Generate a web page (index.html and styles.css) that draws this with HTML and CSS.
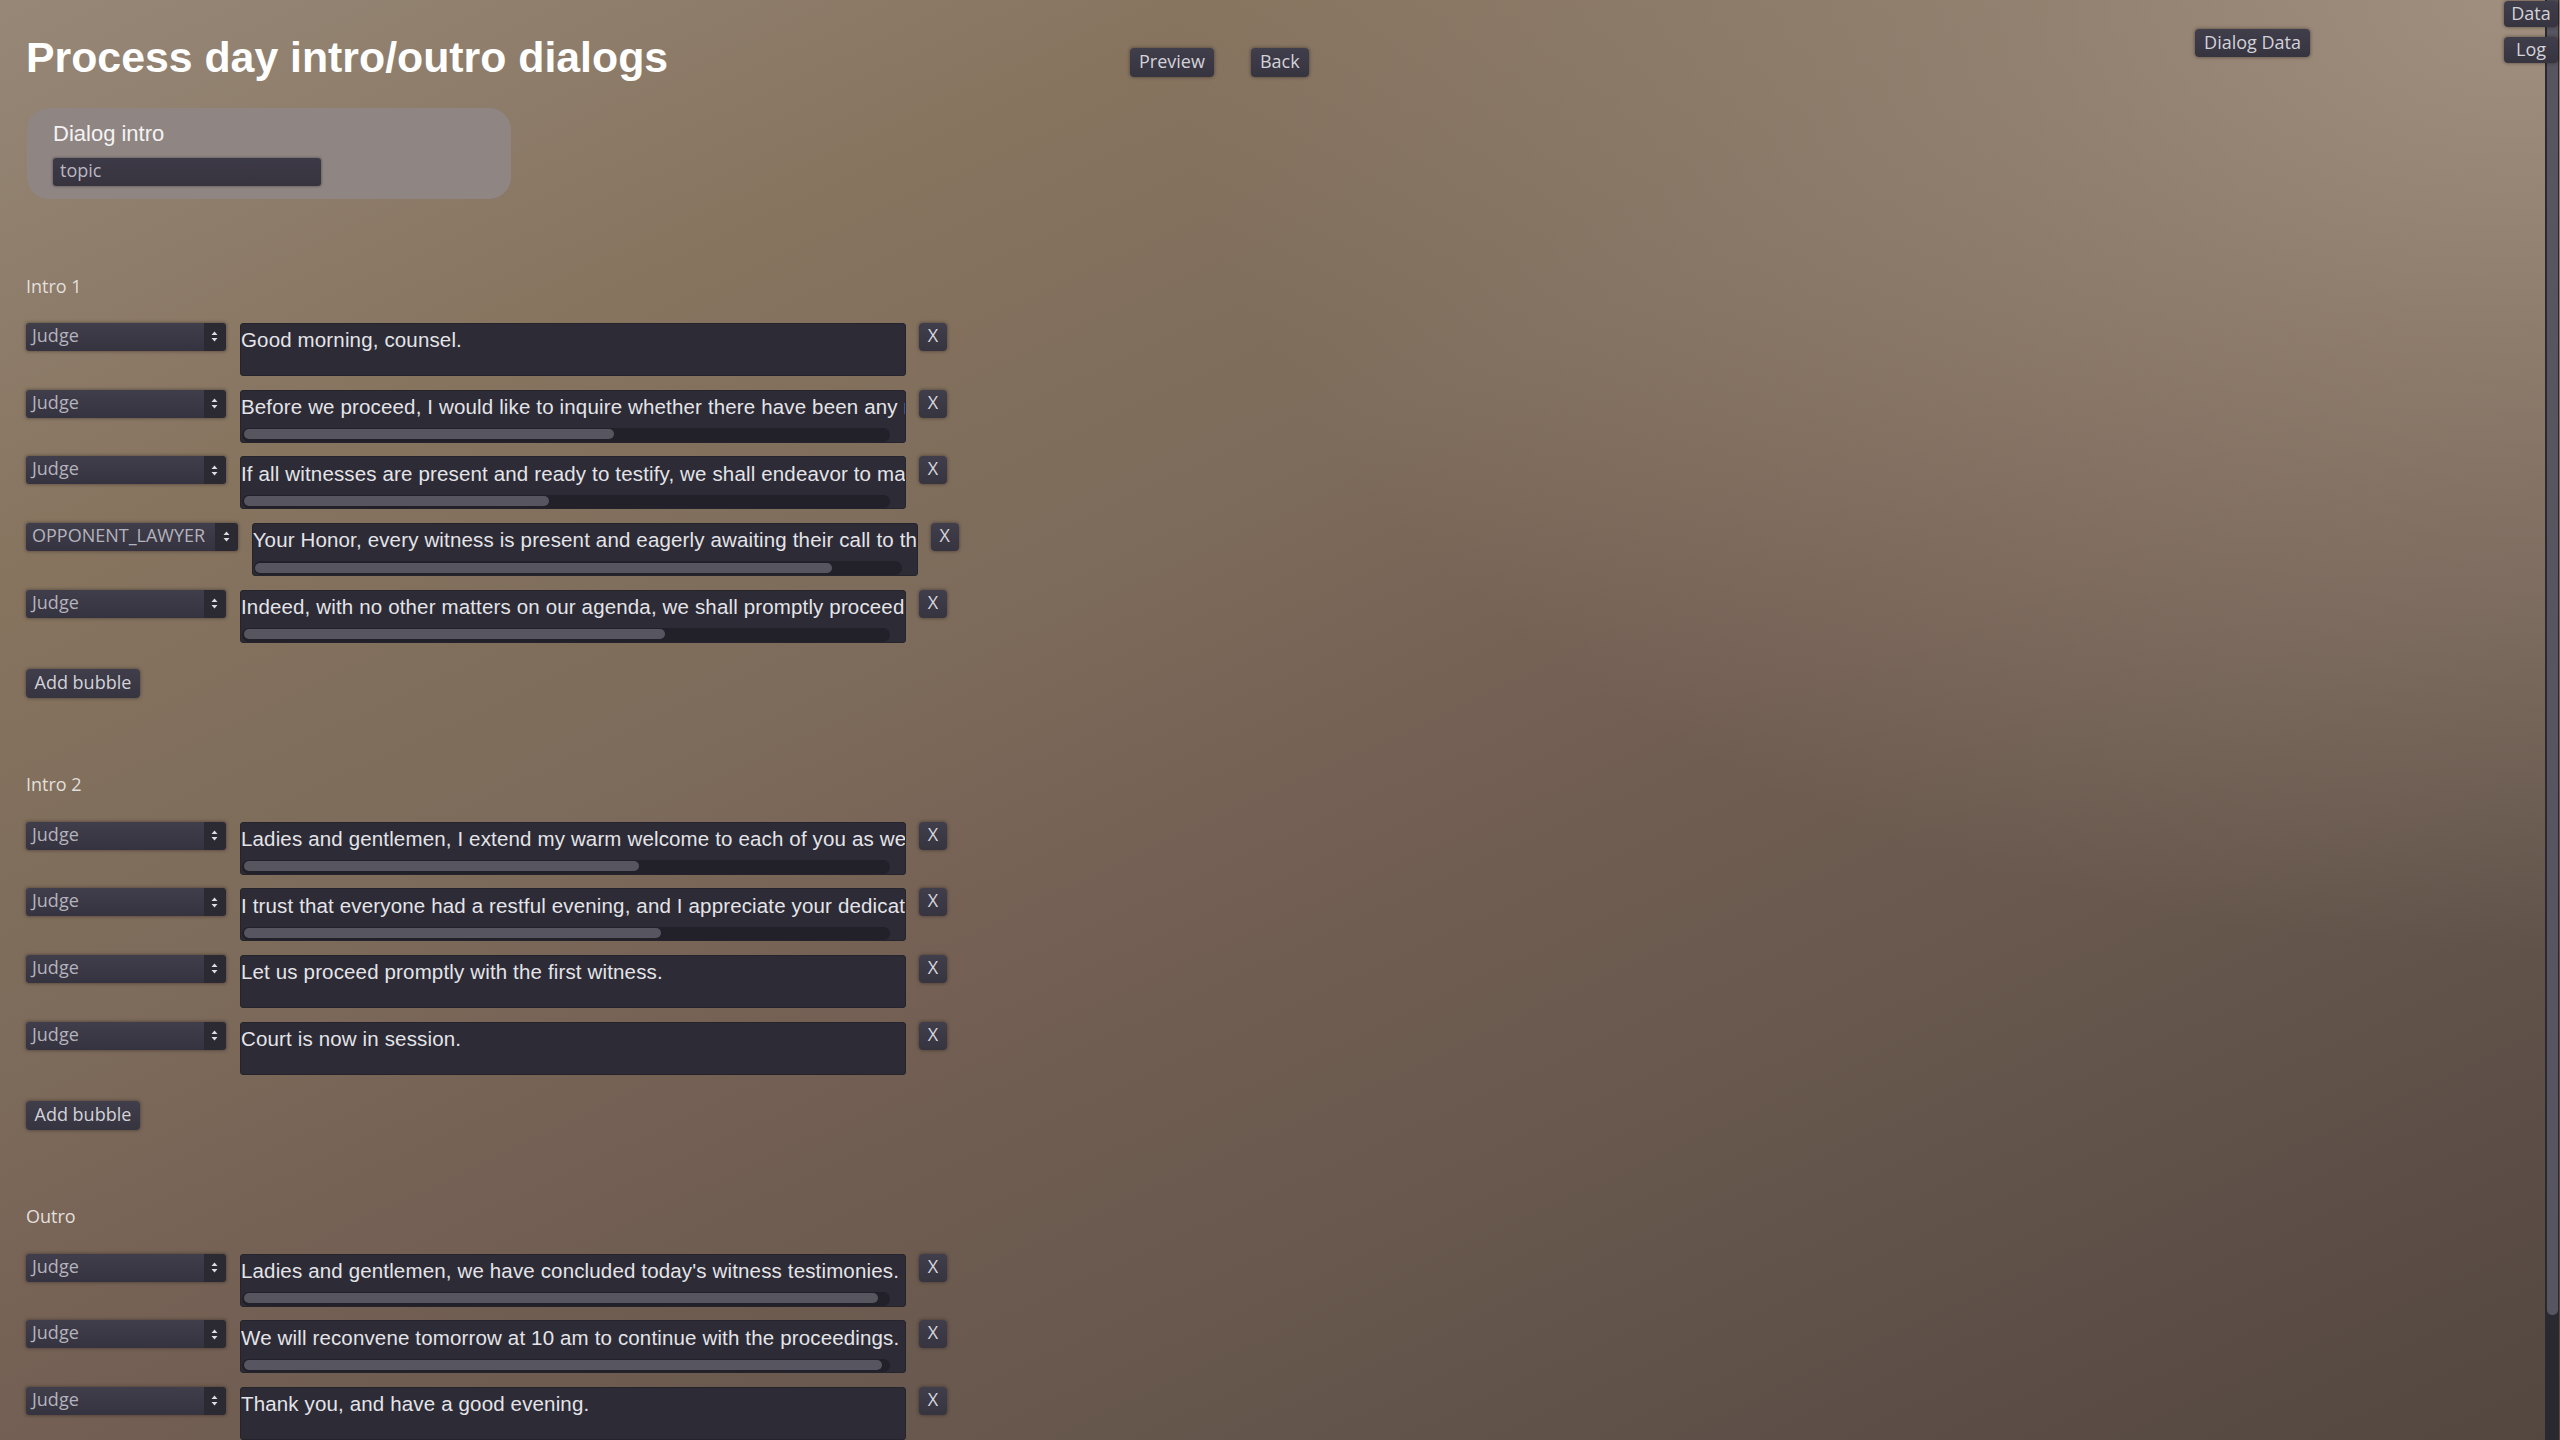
FILE: index.html
```html
<!DOCTYPE html>
<html lang="en">
<head>
<meta charset="utf-8">
<title>Process day intro/outro dialogs</title>
<link rel="stylesheet" href="styles.css">
</head>
<body>
<div class="page">
  <header class="header">
    <h1 class="title">Process day intro/outro dialogs</h1>
    <nav class="nav">
      <button class="btn">Preview</button>
      <button class="btn">Back</button>
    </nav>
    <button class="btn dialog-data">Dialog Data</button>
  </header>

  <section class="intro-panel">
    <div class="panel-label">Dialog intro</div>
    <div class="topic-input">topic</div>
  </section>

  <section class="group">
    <div class="group-label">Intro 1</div>
    <div class="bubbles">
      <div class="bubble">
        <div class="select"><span class="select-value">Judge</span><span class="select-arrow"><svg width="7" height="11" viewBox="0 0 7 11"><path d="M3.5 0.5 L6.5 4 L0.5 4 Z M0.5 7 L6.5 7 L3.5 10.5 Z"/></svg></span></div>
        <div class="textbox"><div class="textbox-text">Good morning, counsel.</div></div>
        <button class="btn btn-x">X</button>
      </div>
      <div class="bubble">
        <div class="select"><span class="select-value">Judge</span><span class="select-arrow"><svg width="7" height="11" viewBox="0 0 7 11"><path d="M3.5 0.5 L6.5 4 L0.5 4 Z M0.5 7 L6.5 7 L3.5 10.5 Z"/></svg></span></div>
        <div class="textbox"><div class="textbox-text">Before we proceed, I would like to inquire whether there have been any new developments since our last session.</div><div class="hscroll"><div class="hgrab" style="width:370px"></div></div></div>
        <button class="btn btn-x">X</button>
      </div>
      <div class="bubble">
        <div class="select"><span class="select-value">Judge</span><span class="select-arrow"><svg width="7" height="11" viewBox="0 0 7 11"><path d="M3.5 0.5 L6.5 4 L0.5 4 Z M0.5 7 L6.5 7 L3.5 10.5 Z"/></svg></span></div>
        <div class="textbox"><div class="textbox-text">If all witnesses are present and ready to testify, we shall endeavor to make swift progress today.</div><div class="hscroll"><div class="hgrab" style="width:305px"></div></div></div>
        <button class="btn btn-x">X</button>
      </div>
      <div class="bubble">
        <div class="select"><span class="select-value">OPPONENT_LAWYER</span><span class="select-arrow"><svg width="7" height="11" viewBox="0 0 7 11"><path d="M3.5 0.5 L6.5 4 L0.5 4 Z M0.5 7 L6.5 7 L3.5 10.5 Z"/></svg></span></div>
        <div class="textbox"><div class="textbox-text">Your Honor, every witness is present and eagerly awaiting their call to the stand.</div><div class="hscroll"><div class="hgrab" style="width:577px"></div></div></div>
        <button class="btn btn-x">X</button>
      </div>
      <div class="bubble">
        <div class="select"><span class="select-value">Judge</span><span class="select-arrow"><svg width="7" height="11" viewBox="0 0 7 11"><path d="M3.5 0.5 L6.5 4 L0.5 4 Z M0.5 7 L6.5 7 L3.5 10.5 Z"/></svg></span></div>
        <div class="textbox"><div class="textbox-text">Indeed, with no other matters on our agenda, we shall promptly proceed with today's hearing.</div><div class="hscroll"><div class="hgrab" style="width:421px"></div></div></div>
        <button class="btn btn-x">X</button>
      </div>
    </div>
    <button class="btn add">Add bubble</button>
  </section>

  <section class="group">
    <div class="group-label">Intro 2</div>
    <div class="bubbles">
      <div class="bubble">
        <div class="select"><span class="select-value">Judge</span><span class="select-arrow"><svg width="7" height="11" viewBox="0 0 7 11"><path d="M3.5 0.5 L6.5 4 L0.5 4 Z M0.5 7 L6.5 7 L3.5 10.5 Z"/></svg></span></div>
        <div class="textbox"><div class="textbox-text">Ladies and gentlemen, I extend my warm welcome to each of you as we gather here today.</div><div class="hscroll"><div class="hgrab" style="width:395px"></div></div></div>
        <button class="btn btn-x">X</button>
      </div>
      <div class="bubble">
        <div class="select"><span class="select-value">Judge</span><span class="select-arrow"><svg width="7" height="11" viewBox="0 0 7 11"><path d="M3.5 0.5 L6.5 4 L0.5 4 Z M0.5 7 L6.5 7 L3.5 10.5 Z"/></svg></span></div>
        <div class="textbox"><div class="textbox-text">I trust that everyone had a restful evening, and I appreciate your dedication to this case.</div><div class="hscroll"><div class="hgrab" style="width:417px"></div></div></div>
        <button class="btn btn-x">X</button>
      </div>
      <div class="bubble">
        <div class="select"><span class="select-value">Judge</span><span class="select-arrow"><svg width="7" height="11" viewBox="0 0 7 11"><path d="M3.5 0.5 L6.5 4 L0.5 4 Z M0.5 7 L6.5 7 L3.5 10.5 Z"/></svg></span></div>
        <div class="textbox"><div class="textbox-text">Let us proceed promptly with the first witness.</div></div>
        <button class="btn btn-x">X</button>
      </div>
      <div class="bubble">
        <div class="select"><span class="select-value">Judge</span><span class="select-arrow"><svg width="7" height="11" viewBox="0 0 7 11"><path d="M3.5 0.5 L6.5 4 L0.5 4 Z M0.5 7 L6.5 7 L3.5 10.5 Z"/></svg></span></div>
        <div class="textbox"><div class="textbox-text">Court is now in session.</div></div>
        <button class="btn btn-x">X</button>
      </div>
    </div>
    <button class="btn add">Add bubble</button>
  </section>

  <section class="group">
    <div class="group-label">Outro</div>
    <div class="bubbles">
      <div class="bubble">
        <div class="select"><span class="select-value">Judge</span><span class="select-arrow"><svg width="7" height="11" viewBox="0 0 7 11"><path d="M3.5 0.5 L6.5 4 L0.5 4 Z M0.5 7 L6.5 7 L3.5 10.5 Z"/></svg></span></div>
        <div class="textbox"><div class="textbox-text">Ladies and gentlemen, we have concluded today's witness testimonies.</div><div class="hscroll"><div class="hgrab" style="width:634px"></div></div></div>
        <button class="btn btn-x">X</button>
      </div>
      <div class="bubble">
        <div class="select"><span class="select-value">Judge</span><span class="select-arrow"><svg width="7" height="11" viewBox="0 0 7 11"><path d="M3.5 0.5 L6.5 4 L0.5 4 Z M0.5 7 L6.5 7 L3.5 10.5 Z"/></svg></span></div>
        <div class="textbox"><div class="textbox-text">We will reconvene tomorrow at 10 am to continue with the proceedings.</div><div class="hscroll"><div class="hgrab" style="width:638px"></div></div></div>
        <button class="btn btn-x">X</button>
      </div>
      <div class="bubble">
        <div class="select"><span class="select-value">Judge</span><span class="select-arrow"><svg width="7" height="11" viewBox="0 0 7 11"><path d="M3.5 0.5 L6.5 4 L0.5 4 Z M0.5 7 L6.5 7 L3.5 10.5 Z"/></svg></span></div>
        <div class="textbox"><div class="textbox-text">Thank you, and have a good evening.</div></div>
        <button class="btn btn-x">X</button>
      </div>
    </div>
    <button class="btn add">Add bubble</button>
  </section>

  <div class="vscroll"><div class="vgrab"></div></div>
  <div class="side-buttons">
    <button class="btn side">Data</button>
    <button class="btn side">Log</button>
  </div>
</div>
</body>
</html>
```

FILE: styles.css
```css
html, body {
  margin: 0;
  padding: 0;
  height: 1440px;
  overflow: hidden;
}

body {
  font-family: "Open Sans", "Noto Sans", sans-serif;
  background: #7a6858;
}

.page {
  position: relative;
  width: 2560px;
  height: 1440px;
  box-sizing: border-box;
  padding-left: 26px;
  overflow: hidden;
  background:
    radial-gradient(ellipse 1350px 950px at 2520px 0px, rgba(160, 143, 126, 1) 0%, rgba(160, 143, 126, 0.6) 35%, rgba(160, 143, 126, 0) 100%),
    linear-gradient(155deg, #978777 0%, #86745f 22%, #7d6b5b 40%, #735f53 55%, #65564c 75%, #574a43 94%, #54473f 100%);
}

/* header */
.header {
  display: flex;
  align-items: flex-start;
  padding-right: 250px;
}

.title {
  flex: 0 0 1104px;
  margin: 32px 0 0 0;
  font: bold 42.8px/50px "Liberation Sans", Arial, sans-serif;
  color: #ffffff;
}

.nav {
  display: flex;
  gap: 37px;
  margin-top: 48px;
}

.btn {
  display: block;
  height: 29px;
  box-sizing: border-box;
  padding: 0 9px 3px;
  margin: 0;
  border: none;
  border-radius: 4px;
  background: linear-gradient(#403e4b, #36343f);
  color: #d3d2d9;
  font: 18px/26px "Open Sans", "Noto Sans", sans-serif;
  white-space: nowrap;
  box-shadow: 0 0 3px 1px rgba(35, 26, 22, 0.35);
}

.dialog-data {
  margin-left: auto;
  margin-top: 29px;
  height: 28px;
  padding-bottom: 2px;
}

/* intro panel */
.intro-panel {
  margin: 26px 0 0 1px;
  width: 484px;
  height: 91px;
  box-sizing: border-box;
  padding: 13px 26px 0;
  background: #8f8684;
  border-radius: 22px;
}

.panel-label {
  font: 22px/25px "Liberation Sans", Arial, sans-serif;
  color: #f4f2f2;
  margin-bottom: 12px;
}

.topic-input {
  width: 268px;
  height: 28px;
  box-sizing: border-box;
  padding: 0 0 0 7px;
  background: linear-gradient(#3d3a47, #37343f);
  border-radius: 3px;
  color: #b9b7c1;
  font: 18px/24px "Open Sans", "Noto Sans", sans-serif;
  box-shadow: 0 0 2px 1px rgba(40, 32, 36, 0.3);
}

/* groups */
.group {
  margin-top: 74.8px;
}

.group-label {
  font: 18px/24px "Open Sans", "Noto Sans", sans-serif;
  color: #e3dfdb;
  margin-bottom: 25.2px;
}

.bubbles {
  display: flex;
  flex-direction: column;
  gap: 13.67px;
}

.bubble {
  display: flex;
  align-items: flex-start;
}

.select {
  display: flex;
  min-width: 200px;
  height: 28px;
  margin-right: 14px;
  border-radius: 3px;
  box-shadow: 0 0 3px 1px rgba(35, 26, 22, 0.35);
}

.select-value {
  flex: 1;
  padding: 0 10px 0 6px;
  background: linear-gradient(#403e4b, #35333f);
  border-radius: 3px 0 0 3px;
  color: #b4b3bd;
  font: 18px/25px "Open Sans", "Noto Sans", sans-serif;
  white-space: nowrap;
}

.select-arrow {
  width: 22.5px;
  display: flex;
  align-items: center;
  justify-content: center;
  background: #2b2a32;
  border-radius: 0 3px 3px 0;
}

.select-arrow svg {
  fill: #dcdce2;
}

.textbox {
  display: flex;
  flex-direction: column;
  width: 666px;
  height: 53px;
  box-sizing: border-box;
  margin-right: 13px;
  background: #2c2b36;
  border: 1px solid #25242c;
  border-radius: 3px;
  overflow: hidden;
}

.textbox-text {
  white-space: nowrap;
  overflow: hidden;
  padding: 4.5px 0 0 0;
  font: 20.5px/23px "Liberation Sans", Arial, sans-serif;
  letter-spacing: 0.15px;
  color: #e4e4e8;
}

.hscroll {
  margin: auto 15px 0 1px;
  height: 13.7px;
  box-sizing: border-box;
  padding: 1.5px;
  background: #22212a;
  border-radius: 7px;
}

.hgrab {
  height: 10px;
  background: #575660;
  border-radius: 5px;
}

.btn-x {
  width: 28px;
  height: 28px;
  padding: 0 0 3px;
  line-height: 25px;
  text-align: center;
  color: #d6d6dd;
}

.add {
  margin-top: 26px;
  padding: 0 8.5px 3px;
}

/* right edge */
.vscroll {
  position: absolute;
  top: 0;
  right: 1px;
  width: 14px;
  height: 1440px;
  box-sizing: border-box;
  padding: 0 1.5px;
  background: #2a2930;
}

.vgrab {
  height: 1315px;
  background: #575560;
  border-radius: 0 0 5px 5px;
}

.side-buttons {
  position: absolute;
  top: 1px;
  right: 2px;
  display: flex;
  flex-direction: column;
  gap: 10px;
}

.side {
  width: 54px;
  height: 26px;
  padding: 0 0 1px;
  line-height: 25px;
  text-align: center;
}
```
